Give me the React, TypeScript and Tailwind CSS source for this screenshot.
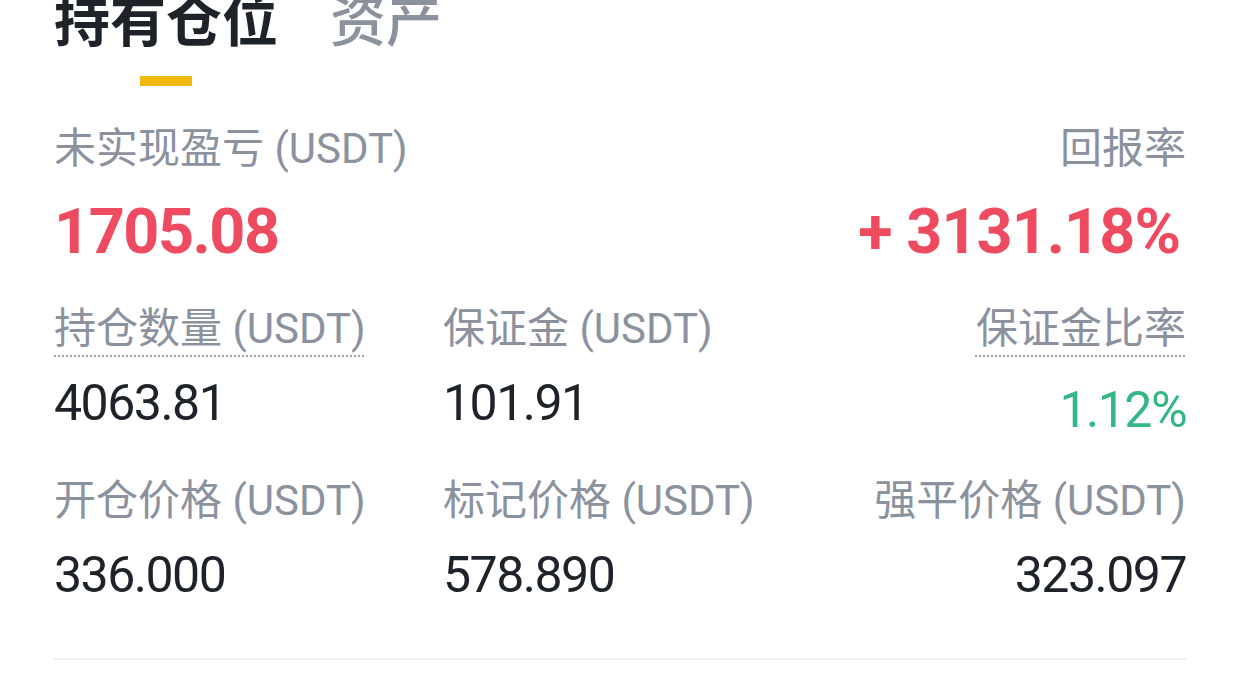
import React from "react";

const CJK = "font-['Roboto','Noto_Sans_CJK_SC',sans-serif]";
const NUM = "font-['Roboto',sans-serif]";

type Cell = {
  label: string;
  value: string;
  dotted?: boolean;
  valueClass?: string;
};

const rows: Cell[][] = [
  [
    { label: "持仓数量 (USDT)", value: "4063.81", dotted: true },
    { label: "保证金 (USDT)", value: "101.91" },
    {
      label: "保证金比率",
      value: "1.12%",
      dotted: true,
      valueClass: "text-[#33b784] pt-[7px] -mb-[7px]",
    },
  ],
  [
    { label: "开仓价格 (USDT)", value: "336.000" },
    { label: "标记价格 (USDT)", value: "578.890" },
    { label: "强平价格 (USDT)", value: "323.097" },
  ],
];

const Label: React.FC<{ text: string; dotted?: boolean }> = ({ text, dotted }) => (
  <div
    className={`${CJK} h-[42px] text-[42px] leading-[42px] text-[#8b929e] whitespace-nowrap ${
      dotted
        ? "underline decoration-dotted decoration-[2px] decoration-[#9aa1ab] underline-offset-[12px]"
        : ""
    }`}
  >
    {text}
  </div>
);

export default function App() {
  return (
    <div className="w-[1240px] h-[697px] overflow-hidden bg-white">
      <div className="px-[54px] mt-[-6px]">
        {/* tabs */}
        <div className={`${CJK} flex items-start gap-[52px] text-[56px] leading-[56px]`}>
          <div className="flex flex-col items-center">
            <span className="h-[56px] font-bold text-[#1e2329]">持有仓位</span>
            <div className="mt-[26px] h-[10px] w-[52px] shrink-0 bg-[#f0b90b]" />
          </div>
          <span className="h-[56px] font-medium text-[#8b929e]">资产</span>
        </div>

        {/* pnl */}
        <div className="mt-[42px] flex justify-between">
          <Label text="未实现盈亏 (USDT)" />
          <Label text="回报率" />
        </div>
        <div
          className={`${NUM} mt-[30px] flex h-[63px] justify-between text-[63px] leading-[63px] font-bold text-[#ee4a60]`}
        >
          <span className="tracking-[-1.5px]">1705.08</span>
          <span className="mr-[6px] tracking-[-1px]">+&nbsp;3131.18%</span>
        </div>

        {/* details */}
        {rows.map((row, ri) => (
          <div key={ri} className={`grid grid-cols-[389px_1fr_auto] ${ri === 0 ? "mt-[45px]" : "mt-[52px]"}`}>
            {row.map((c, ci) => (
              <div key={ci} className={`flex flex-col ${ci === 2 ? "items-end" : "items-start"}`}>
                <Label text={c.label} dotted={c.dotted} />
                <div
                  className={`${NUM} mt-[28px] h-[50px] text-[50px] leading-[50px] tracking-[-1.5px] ${
                    c.valueClass ?? "text-[#1e2329]"
                  }`}
                >
                  {c.value}
                </div>
              </div>
            ))}
          </div>
        ))}

        <div className="mt-[58px] h-[2px] bg-[#eceef1]" />
      </div>
    </div>
  );
}
